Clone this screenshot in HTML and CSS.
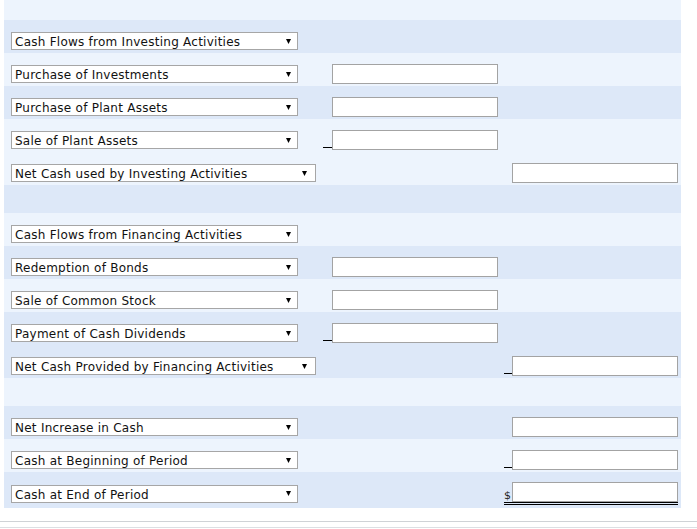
FILE: index.html
```html
<!DOCTYPE html>
<html>
<head>
<meta charset="utf-8">
<link rel="stylesheet" href="styles.css">
</head>
<body>
<div class="sheet">
  <div class="band light"></div>

  <div class="row dark">
    <div class="c1"><div class="sel">Cash Flows from Investing Activities<svg class="arr" viewBox="0 0 5 5"><path d="M0 0H5L2.5 5Z"/></svg></div></div>
    <div class="c2"></div><div class="c3"></div>
  </div>
  <div class="row light">
    <div class="c1"><div class="sel">Purchase of Investments<svg class="arr" viewBox="0 0 5 5"><path d="M0 0H5L2.5 5Z"/></svg></div></div>
    <div class="c2"><span class="inp"></span></div><div class="c3"></div>
  </div>
  <div class="row dark">
    <div class="c1"><div class="sel">Purchase of Plant Assets<svg class="arr" viewBox="0 0 5 5"><path d="M0 0H5L2.5 5Z"/></svg></div></div>
    <div class="c2"><span class="inp"></span></div><div class="c3"></div>
  </div>
  <div class="row light">
    <div class="c1"><div class="sel">Sale of Plant Assets<svg class="arr" viewBox="0 0 5 5"><path d="M0 0H5L2.5 5Z"/></svg></div></div>
    <div class="c2"><span class="rule"></span><span class="inp"></span></div><div class="c3"></div>
  </div>
  <div class="row light">
    <div class="c1"><div class="sel wide">Net Cash used by Investing Activities<svg class="arr" viewBox="0 0 5 5"><path d="M0 0H5L2.5 5Z"/></svg></div></div>
    <div class="c2"></div><div class="c3"><span class="inp"></span></div>
  </div>
  <div class="gap dark"></div>

  <div class="row light">
    <div class="c1"><div class="sel">Cash Flows from Financing Activities<svg class="arr" viewBox="0 0 5 5"><path d="M0 0H5L2.5 5Z"/></svg></div></div>
    <div class="c2"></div><div class="c3"></div>
  </div>
  <div class="row dark">
    <div class="c1"><div class="sel">Redemption of Bonds<svg class="arr" viewBox="0 0 5 5"><path d="M0 0H5L2.5 5Z"/></svg></div></div>
    <div class="c2"><span class="inp"></span></div><div class="c3"></div>
  </div>
  <div class="row light">
    <div class="c1"><div class="sel">Sale of Common Stock<svg class="arr" viewBox="0 0 5 5"><path d="M0 0H5L2.5 5Z"/></svg></div></div>
    <div class="c2"><span class="inp"></span></div><div class="c3"></div>
  </div>
  <div class="row dark">
    <div class="c1"><div class="sel">Payment of Cash Dividends<svg class="arr" viewBox="0 0 5 5"><path d="M0 0H5L2.5 5Z"/></svg></div></div>
    <div class="c2"><span class="rule"></span><span class="inp"></span></div><div class="c3"></div>
  </div>
  <div class="row dark">
    <div class="c1"><div class="sel wide">Net Cash Provided by Financing Activities<svg class="arr" viewBox="0 0 5 5"><path d="M0 0H5L2.5 5Z"/></svg></div></div>
    <div class="c2"></div><div class="c3"><span class="rule"></span><span class="inp"></span></div>
  </div>
  <div class="gap light"></div>

  <div class="row dark">
    <div class="c1"><div class="sel">Net Increase in Cash<svg class="arr" viewBox="0 0 5 5"><path d="M0 0H5L2.5 5Z"/></svg></div></div>
    <div class="c2"></div><div class="c3"><span class="inp"></span></div>
  </div>
  <div class="row light">
    <div class="c1"><div class="sel">Cash at Beginning of Period<svg class="arr" viewBox="0 0 5 5"><path d="M0 0H5L2.5 5Z"/></svg></div></div>
    <div class="c2"></div><div class="c3"><span class="rule"></span><span class="inp"></span></div>
  </div>
  <div class="row dark last">
    <div class="c1"><div class="sel">Cash at End of Period<svg class="arr" viewBox="0 0 5 5"><path d="M0 0H5L2.5 5Z"/></svg></div></div>
    <div class="c2"></div><div class="c3"><div class="total"><span class="cur">$</span><span class="inp"></span></div></div>
  </div>
</div>
<div class="foot1"></div>
<div class="foot2"></div>
</body>
</html>
```

FILE: styles.css
```css
html, body {
  margin: 0;
  padding: 0;
  background: #ffffff;
}
body {
  font-family: "DejaVu Sans", Verdana, sans-serif;
  font-size: 12px;
  color: #000;
}
.sheet {
  margin-left: 4px;
  width: 677px;
}
.light { background: #edf4fd; }
.dark { background: #dde8f8; }
.band { height: 20px; }
.gap { height: 28px; }
.row {
  display: grid;
  grid-template-columns: 316px 180px 181px;
  height: 33px;
  box-sizing: border-box;
  padding-top: 10px;
  padding-bottom: 1px;
  align-items: center;
}
.row.last {
  height: 36px;
  padding-bottom: 3px;
}
.c1 {
  padding-left: 7px;
  display: flex;
}
.c2, .c3 {
  display: flex;
  justify-content: flex-end;
  align-items: flex-end;
}
.c2 { padding-right: 2px; }
.c3 { padding-right: 3px; }
.sel {
  width: 287px;
  height: 18px;
  box-sizing: border-box;
  border: 1px solid #a6a6a6;
  background: #fff;
  display: flex;
  align-items: center;
  justify-content: space-between;
  padding: 2px 6px 0 3px;
  line-height: 14px;
  letter-spacing: 0.25px;
  white-space: nowrap;
  color: #111;
}
.sel.wide { width: 305px; padding-right: 8px; }
.arr {
  width: 5px;
  height: 5px;
  fill: #000;
  flex: none;
  margin-top: -2px;
}
.inp {
  display: block;
  width: 166px;
  height: 20px;
  box-sizing: border-box;
  border: 1px solid #a3a3a3;
  background: #fff;
}
.rule {
  display: block;
  width: 9px;
  height: 0;
  border-bottom: 1px solid #000;
  margin-bottom: 2px;
}
.c3 .rule { width: 8px; }
.total {
  display: flex;
  align-items: flex-end;
  border-bottom: 3px double #000;
}
.cur {
  display: block;
  width: 8px;
  font-size: 11px;
  line-height: 12px;
  color: #222;
}
.foot1 {
  margin-top: 13px;
  height: 1px;
  background: #cfd2d6;
}
.foot2 {
  margin-top: 5px;
  height: 1px;
  background: #dcdfe3;
}
```
